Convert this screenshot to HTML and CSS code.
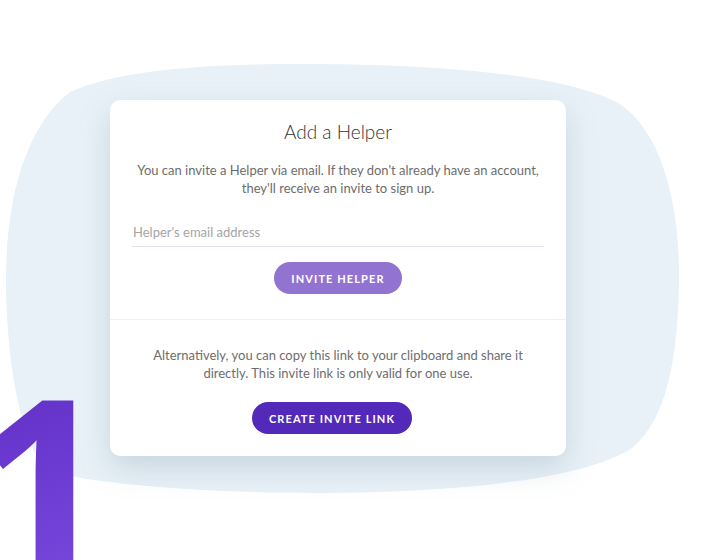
FILE: index.html
```html
<!DOCTYPE html>
<html lang="en">
<head>
<meta charset="UTF-8">
<meta name="viewport" content="width=device-width, initial-scale=1.0">
<title>Add a Helper</title>
<link rel="stylesheet" href="styles.css">
</head>
<body>

<div class="stage">
  <svg class="blob" width="718" height="560" viewBox="0 0 718 560">
    <path d="M300 64 C450 64 570 76 620 104 C664 134 680 210 679 280 C678 360 666 420 632 448 C584 480 450 493 320 493 C200 493 100 484 52 472 C22 456 6 360 6 280 C6 190 30 122 70 92 C120 70 200 64 300 64 Z" fill="#e8f1f7"/>
  </svg>
  <div class="big-one">1</div>

  <div class="card">
    <div class="section">
      <h2>Add a Helper</h2>
      <p>You can invite a Helper via email. If they don't already have an account, they'll receive an invite to sign up.</p>
      <input type="email" placeholder="Helper's email address">
      <button class="btn btn-light">Invite Helper</button>
    </div>
    <div class="section section-alt">
      <p>Alternatively, you can copy this link to your clipboard and share it directly. This invite link is only valid for one use.</p>
      <button class="btn btn-dark">Create Invite Link</button>
    </div>
  </div>
</div>

</body>
</html>
```

FILE: styles.css
```css
html, body { margin: 0; padding: 0; }
body { font-family: Lato, "Open Sans", sans-serif; background: #fff; width: 718px; height: 560px; overflow: hidden; }
.stage { position: relative; width: 718px; height: 560px; padding-top: 100px; box-sizing: border-box; overflow: hidden; }
.blob { position: absolute; top: 0; left: 0; }
.big-one { position: absolute; left: -30px; top: 357px; font-family: "Open Sans", sans-serif; font-weight: 700; font-size: 250px; line-height: 1; background: linear-gradient(160deg, #5f2cc4 0%, #7b4ce0 100%); -webkit-background-clip: text; background-clip: text; color: transparent; }
.card { position: relative; margin-left: 110px; width: 456px; background: #fff; border-radius: 10px; box-shadow: 0 12px 30px rgba(120, 145, 165, 0.28); text-align: center; }
.section { padding: 20px 22px 25px; display: flex; flex-direction: column; align-items: center; }
.section-alt { border-top: 1px solid #eef0f2; padding: 26px 22px 22px; }
h2 { margin: 0; font-size: 19px; line-height: 24px; font-weight: 300; color: #333; }
p { margin: 17px 0 0; font-size: 13px; line-height: 18px; color: #6d6d6d; padding: 0 4px; }
.section-alt p { margin: 0; padding: 0 20px; }
input { width: 100%; box-sizing: border-box; margin-top: 20px; height: 30px; border: none; border-bottom: 1px solid #dfe5eb; font-family: inherit; font-size: 13px; color: #333; padding: 0 1px; outline: none; }
input::placeholder { color: #a5a5a5; }
.btn { border: none; border-radius: 16px; height: 32px; color: #fff; font-family: inherit; font-size: 11px; font-weight: 700; letter-spacing: 1.1px; text-transform: uppercase; cursor: pointer; }
.btn-light { margin-top: 15px; width: 128px; background: #9373d2; }
.btn-dark { margin-top: 20px; margin-right: 12px; width: 160px; background: #5229b9; }
```
